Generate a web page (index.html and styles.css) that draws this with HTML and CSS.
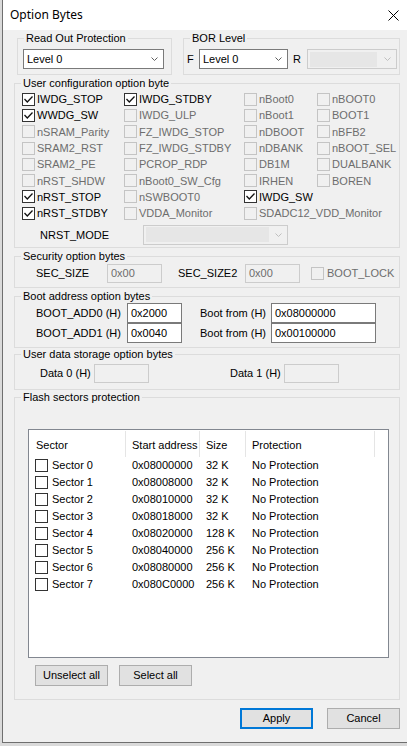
FILE: index.html
```html
<!DOCTYPE html>
<html>
<head>
<meta charset="utf-8">
<title>Option Bytes</title>
<link rel="stylesheet" href="styles.css">
</head>
<body>
<div class="window">
  <div class="titlebar">
    <span class="title">Option Bytes</span>
    <svg class="close" width="11" height="11" viewBox="0 0 11 11"><path d="M0.5 0.5 L10.5 10.5 M10.5 0.5 L0.5 10.5" stroke="#000" stroke-width="1" fill="none"/></svg>
  </div>
  <div class="content">
    <div class="row-top">
      <div class="group g-rop">
        <div class="legend">Read Out Protection</div>
        <div class="combo c-rop"><span class="combo-text">Level 0</span><svg class="chev" width="7" height="4" viewBox="0 0 7 4"><polyline points="0.5,0.5 3.5,3.5 6.5,0.5" stroke="#606060" fill="none"/></svg></div>
      </div>
      <div class="group g-bor">
        <div class="legend">BOR Level</div>
        <div class="bor-row">
          <span class="fl">F</span>
          <div class="combo c-f"><span class="combo-text">Level 0</span><svg class="chev" width="7" height="4" viewBox="0 0 7 4"><polyline points="0.5,0.5 3.5,3.5 6.5,0.5" stroke="#606060" fill="none"/></svg></div>
          <span class="rl">R</span>
          <div class="combo dis c-r"><span class="combo-edit"></span><svg class="chev" width="7" height="4" viewBox="0 0 7 4"><polyline points="0.5,0.5 3.5,3.5 6.5,0.5" stroke="#bfbfbf" fill="none"/></svg></div>
        </div>
      </div>
    </div>

    <div class="group g-user">
      <div class="legend">User configuration option byte</div>
      <div class="ugrid">
        <label class="chk"><span class="box on"><svg width="11" height="11" viewBox="0 0 11 11"><polyline points="1.5,5 4.3,8 9.5,2.5" stroke="#111" stroke-width="1.3" fill="none"/></svg></span><span>IWDG_STOP</span></label>
        <label class="chk"><span class="box on"><svg width="11" height="11" viewBox="0 0 11 11"><polyline points="1.5,5 4.3,8 9.5,2.5" stroke="#111" stroke-width="1.3" fill="none"/></svg></span><span>IWDG_STDBY</span></label>
        <label class="chk dis"><span class="box"></span><span>nBoot0</span></label>
        <label class="chk dis"><span class="box"></span><span>nBOOT0</span></label>

        <label class="chk"><span class="box on"><svg width="11" height="11" viewBox="0 0 11 11"><polyline points="1.5,5 4.3,8 9.5,2.5" stroke="#111" stroke-width="1.3" fill="none"/></svg></span><span>WWDG_SW</span></label>
        <label class="chk dis"><span class="box"></span><span>IWDG_ULP</span></label>
        <label class="chk dis"><span class="box"></span><span>nBoot1</span></label>
        <label class="chk dis"><span class="box"></span><span>BOOT1</span></label>

        <label class="chk dis"><span class="box"></span><span>nSRAM_Parity</span></label>
        <label class="chk dis"><span class="box"></span><span>FZ_IWDG_STOP</span></label>
        <label class="chk dis"><span class="box"></span><span>nDBOOT</span></label>
        <label class="chk dis"><span class="box"></span><span>nBFB2</span></label>

        <label class="chk dis"><span class="box"></span><span>SRAM2_RST</span></label>
        <label class="chk dis"><span class="box"></span><span>FZ_IWDG_STDBY</span></label>
        <label class="chk dis"><span class="box"></span><span>nDBANK</span></label>
        <label class="chk dis"><span class="box"></span><span>nBOOT_SEL</span></label>

        <label class="chk dis"><span class="box"></span><span>SRAM2_PE</span></label>
        <label class="chk dis"><span class="box"></span><span>PCROP_RDP</span></label>
        <label class="chk dis"><span class="box"></span><span>DB1M</span></label>
        <label class="chk dis"><span class="box"></span><span>DUALBANK</span></label>

        <label class="chk dis"><span class="box"></span><span>nRST_SHDW</span></label>
        <label class="chk dis"><span class="box"></span><span>nBoot0_SW_Cfg</span></label>
        <label class="chk dis"><span class="box"></span><span>IRHEN</span></label>
        <label class="chk dis"><span class="box"></span><span>BOREN</span></label>

        <label class="chk"><span class="box on"><svg width="11" height="11" viewBox="0 0 11 11"><polyline points="1.5,5 4.3,8 9.5,2.5" stroke="#111" stroke-width="1.3" fill="none"/></svg></span><span>nRST_STOP</span></label>
        <label class="chk dis"><span class="box"></span><span>nSWBOOT0</span></label>
        <label class="chk"><span class="box on"><svg width="11" height="11" viewBox="0 0 11 11"><polyline points="1.5,5 4.3,8 9.5,2.5" stroke="#111" stroke-width="1.3" fill="none"/></svg></span><span>IWDG_SW</span></label>
        <span></span>

        <label class="chk"><span class="box on"><svg width="11" height="11" viewBox="0 0 11 11"><polyline points="1.5,5 4.3,8 9.5,2.5" stroke="#111" stroke-width="1.3" fill="none"/></svg></span><span>nRST_STDBY</span></label>
        <label class="chk dis"><span class="box"></span><span>VDDA_Monitor</span></label>
        <label class="chk dis"><span class="box"></span><span>SDADC12_VDD_Monitor</span></label>
        <span></span>
      </div>
      <div class="nrst-row">
        <span class="nrst-label">NRST_MODE</span>
        <div class="combo dis c-nrst"><span class="combo-edit"></span><svg class="chev" width="7" height="4" viewBox="0 0 7 4"><polyline points="0.5,0.5 3.5,3.5 6.5,0.5" stroke="#bfbfbf" fill="none"/></svg></div>
      </div>
    </div>

    <div class="group g-sec">
      <div class="legend">Security option bytes</div>
      <div class="sec-row">
        <span class="lbl l-sec1">SEC_SIZE</span>
        <div class="field dis w55">0x00</div>
        <span class="lbl l-sec2">SEC_SIZE2</span>
        <div class="field dis w55">0x00</div>
        <label class="chk dis bootlock"><span class="box"></span><span>BOOT_LOCK</span></label>
      </div>
    </div>

    <div class="group g-boot">
      <div class="legend">Boot address option bytes</div>
      <div class="boot-row">
        <span class="lbl l-boot1">BOOT_ADD0 (H)</span>
        <div class="field w55">0x2000</div>
        <span class="lbl l-boot2">Boot from (H)</span>
        <div class="field w105">0x08000000</div>
      </div>
      <div class="boot-row">
        <span class="lbl l-boot1">BOOT_ADD1 (H)</span>
        <div class="field w55">0x0040</div>
        <span class="lbl l-boot2">Boot from (H)</span>
        <div class="field w105">0x00100000</div>
      </div>
    </div>

    <div class="group g-data">
      <div class="legend">User data storage option bytes</div>
      <div class="data-row">
        <span class="lbl l-data1">Data 0 (H)</span>
        <div class="field dis w55"></div>
        <span class="lbl l-data2">Data 1 (H)</span>
        <div class="field dis w55"></div>
      </div>
    </div>

    <div class="group g-flash">
      <div class="legend">Flash sectors protection</div>
      <div class="list">
        <div class="lrow lhead">
          <span class="hc c1">Sector</span>
          <span class="hc">Start address</span>
          <span class="hc">Size</span>
          <span class="hc">Protection</span>
          <span class="hc last"></span>
        </div>
        <div class="lrow"><span class="sc"><span class="box"></span>Sector 0</span><span class="tc">0x08000000</span><span class="tc">32 K</span><span class="tc">No Protection</span><span></span></div>
        <div class="lrow"><span class="sc"><span class="box"></span>Sector 1</span><span class="tc">0x08008000</span><span class="tc">32 K</span><span class="tc">No Protection</span><span></span></div>
        <div class="lrow"><span class="sc"><span class="box"></span>Sector 2</span><span class="tc">0x08010000</span><span class="tc">32 K</span><span class="tc">No Protection</span><span></span></div>
        <div class="lrow"><span class="sc"><span class="box"></span>Sector 3</span><span class="tc">0x08018000</span><span class="tc">32 K</span><span class="tc">No Protection</span><span></span></div>
        <div class="lrow"><span class="sc"><span class="box"></span>Sector 4</span><span class="tc">0x08020000</span><span class="tc">128 K</span><span class="tc">No Protection</span><span></span></div>
        <div class="lrow"><span class="sc"><span class="box"></span>Sector 5</span><span class="tc">0x08040000</span><span class="tc">256 K</span><span class="tc">No Protection</span><span></span></div>
        <div class="lrow"><span class="sc"><span class="box"></span>Sector 6</span><span class="tc">0x08080000</span><span class="tc">256 K</span><span class="tc">No Protection</span><span></span></div>
        <div class="lrow"><span class="sc"><span class="box"></span>Sector 7</span><span class="tc">0x080C0000</span><span class="tc">256 K</span><span class="tc">No Protection</span><span></span></div>
      </div>
      <div class="sel-row">
        <div class="btn">Unselect all</div>
        <div class="btn">Select all</div>
      </div>
    </div>

    <div class="dlg-row">
      <div class="btn default">Apply</div>
      <div class="btn">Cancel</div>
    </div>
  </div>
</div>
</body>
</html>
```
FILE: styles.css
```css
* { box-sizing: border-box; }
html, body { margin: 0; padding: 0; }
body {
  width: 407px;
  height: 746px;
  overflow: hidden;
  background: #dadada;
  padding-left: 2px;
  font-family: "Liberation Sans", Arial, sans-serif;
  font-size: 11px;
  color: #000;
}
.window {
  width: 405px;
  height: 743px;
  background: #f0f0f0;
  border-left: 1px solid #6f6f6f;
  border-bottom: 1px solid #6f6f6f;
  display: flex;
  flex-direction: column;
}
.titlebar {
  height: 30px;
  flex: none;
  background: #fff;
  display: flex;
  align-items: center;
  justify-content: space-between;
  padding-left: 7px;
  padding-right: 8px;
}
.title {
  font-family: "Noto Sans", "Open Sans", sans-serif;
  font-size: 12px;
  line-height: 16px;
}
.close { display: block; }
.content {
  padding: 0 7px 0 11px;
  display: flex;
  flex-direction: column;
}
.group { border: 1px solid #dcdcdc; }
.legend {
  margin: -7px 0 0 6px;
  padding: 0 2px;
  background: #f0f0f0;
  width: max-content;
  height: 13px;
  line-height: 13px;
}

/* combos */
.combo {
  height: 20px;
  background: #fff;
  border: 1px solid #7a7a7a;
  display: flex;
  align-items: center;
  justify-content: space-between;
  padding: 0 5px 0 3px;
}
.combo-text { line-height: 13px; }
.chev { display: block; flex: none; }
.combo.dis {
  background: #f0f0f0;
  border-color: #cccccc;
  padding-left: 2px;
}
.combo-edit {
  display: block;
  height: 15px;
  background: #e6e6e6;
}

/* top row */
.row-top { display: flex; margin-top: 8px; }
.g-rop { margin-left: 3px; width: 155px; padding-bottom: 5px; }
.c-rop { margin: 4px 0 0 5px; width: 141px; }
.g-bor { margin-left: 11px; width: 217px; padding-bottom: 5px; }
.bor-row { display: flex; align-items: center; margin-top: 4px; padding-left: 3px; }
.fl { width: 12px; }
.c-f { width: 89px; }
.rl { margin-left: 5px; width: 14px; }
.c-r { width: 90px; }
.c-r .combo-edit { width: 67px; }

/* checkboxes */
.box {
  display: flex;
  align-items: center;
  justify-content: center;
  flex: none;
  width: 13px;
  height: 13px;
  background: #fff;
  border: 1px solid #333;
}
.box svg { display: block; }
.chk {
  display: flex;
  align-items: center;
  gap: 2px;
  white-space: nowrap;
}
.chk.dis { color: #6d6d6d; }
.chk.dis .box { background: #f0f0f0; border-color: #c4c4c4; }

/* user config */
.g-user { margin-top: 8px; padding-bottom: 2px; }
.ugrid {
  display: grid;
  grid-template-columns: 102px 120px 73px 1fr;
  grid-auto-rows: 16.3px;
  padding: 1px 0 0 7px;
}
.nrst-row { display: flex; align-items: center; margin-top: 3.6px; }
.nrst-label { margin-left: 25px; width: 103px; }
.c-nrst { width: 145px; }
.c-nrst .combo-edit { width: 123px; }

/* fields */
.field {
  height: 19px;
  background: #fff;
  border: 1px solid #7a7a7a;
  padding-left: 3px;
  line-height: 17px;
  white-space: nowrap;
}
.field.dis { background: #f0f0f0; border-color: #cccccc; color: #6d6d6d; }
.w55 { width: 55px; }
.w105 { width: 105px; }
.lbl { white-space: nowrap; flex: none; }

/* security */
.g-sec { margin-top: 8px; padding-bottom: 4px; }
.sec-row { display: flex; align-items: center; margin-top: 1px; }
.l-sec1 { margin-left: 21px; width: 71px; }
.l-sec2 { margin-left: 16px; width: 67px; }
.bootlock { margin-left: 11px; gap: 3px; }

/* boot */
.g-boot { margin-top: 8px; padding-bottom: 4px; }
.boot-row { display: flex; align-items: center; height: 20px; }
.boot-row .field { height: 20px; line-height: 18px; }
.l-boot1 { margin-left: 21px; width: 91px; }
.l-boot2 { margin-left: 18px; width: 71px; }

/* data */
.g-data { margin-top: 6px; padding-bottom: 6px; }
.data-row { display: flex; align-items: center; margin-top: 3px; }
.l-data1 { margin-left: 25px; width: 54px; }
.l-data2 { margin-left: 81px; width: 54px; }

/* flash */
.g-flash { margin-top: 7px; padding-bottom: 13px; }
.list {
  margin: 25px 0 0 13px;
  width: 361px;
  height: 229px;
  background: #fff;
  border: 1px solid #828790;
}
.lrow {
  display: grid;
  grid-template-columns: 97px 74px 46px 129px 1fr;
  height: 17px;
  align-items: center;
  white-space: nowrap;
}
.lrow.lhead { height: 27px; align-items: stretch; padding-top: 1px; }
.hc {
  display: flex;
  align-items: center;
  padding-left: 6px;
  padding-top: 2px;
  border-right: 1px solid #e5e5e5;
}
.hc.c1 { padding-left: 7px; }
.hc.last { border-right: none; }
.tc { padding-left: 6px; }
.sc { display: flex; align-items: center; gap: 4px; padding-left: 6px; }
.sel-row { display: flex; gap: 11px; margin: 7px 0 0 20px; }

/* buttons */
.btn {
  width: 73px;
  height: 21px;
  background: #e1e1e1;
  border: 1px solid #adadad;
  display: flex;
  align-items: center;
  justify-content: center;
  white-space: nowrap;
}
.btn.default { border: 2px solid #0078d7; }
.dlg-row { display: flex; justify-content: flex-end; gap: 14px; margin-top: 8px; }
```
